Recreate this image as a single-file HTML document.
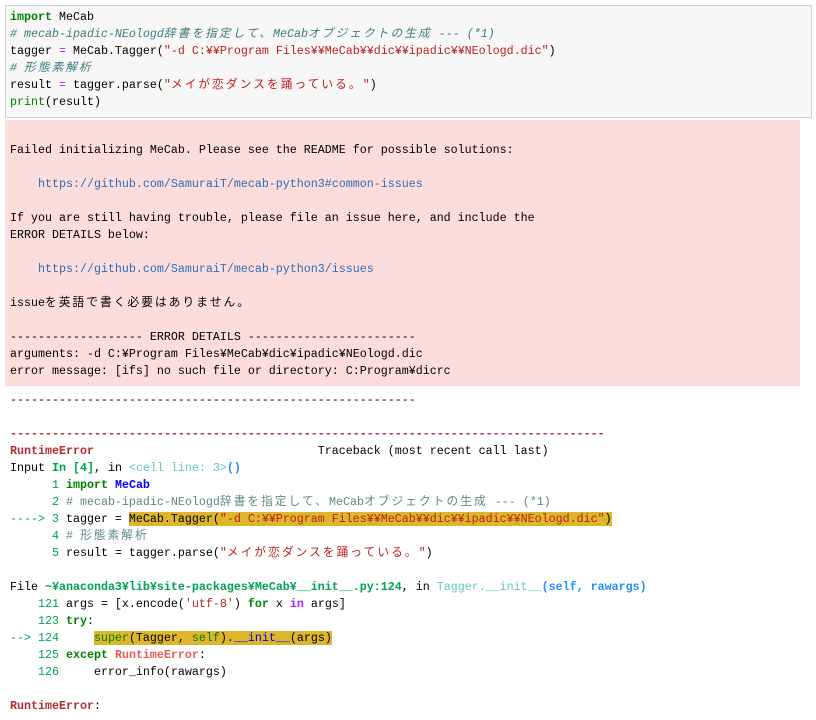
<!DOCTYPE html>
<html><head><meta charset="utf-8"><style>
body{margin:0;background:#fff;width:816px;height:720px;overflow:hidden;font-family:"Liberation Mono","Noto Sans CJK JP",monospace;font-size:11.67px;}
pre{margin:0;font:inherit;line-height:17px;white-space:pre;}
.j{letter-spacing:2.1px;font-family:"Noto Sans CJK JP",monospace;line-height:0;}
#code{position:absolute;left:5px;top:5px;width:805px;height:111px;background:#f7f7f7;border:1px solid #cfcfcf;}
#code pre{position:absolute;left:4px;top:3px;}
#err{position:absolute;left:5px;top:120px;width:795px;height:266px;background:#fddcdc;}
#err pre{position:absolute;left:5px;top:4.5px;}
#tb{position:absolute;left:10px;top:391.5px;}
.k{color:#008000;font-weight:bold}.c{color:#3d7b7b;font-style:italic}.s{color:#ba2121}.o{color:#aa22ff}.b{color:#008000}
.l{color:#2a6eb8}
.re{color:#b22b31;font-weight:bold}.g{color:#00a250}.gb{color:#00a250;font-weight:bold}
.cy{color:#60c6c8}.bl{color:#208ffb;font-weight:bold}.hl{background:#ddb62b}
.gy{color:#5f8787}.rd{color:#e75c58}.bu{color:#0000ff}
.mg{color:#aa22ff;font-weight:bold}.bk{color:#0000ff;font-weight:bold}.gk{color:#008000;font-weight:bold}.dr{color:#ba2121}
</style></head><body>
<div id="code"><pre><span class="k">import</span> MeCab
<span class="c"># mecab-ipadic-NEologd<span class="j">辞書を指定して、</span>MeCab<span class="j">オブジェクトの生成</span> --- (*1)</span>
tagger <span class="o">=</span> MeCab.Tagger(<span class="s">"-d C:¥¥Program Files¥¥MeCab¥¥dic¥¥ipadic¥¥NEologd.dic"</span>)
<span class="c"># <span class="j">形態素解析</span></span>
result <span class="o">=</span> tagger.parse(<span class="s">"<span class="j">メイが恋ダンスを踊っている。</span>"</span>)
<span class="b">print</span>(result)</pre></div>
<div id="err"><pre>

Failed initializing MeCab. Please see the README for possible solutions:

    <span class="l">https://github.com/SamuraiT/mecab-python3#common-issues</span>

If you are still having trouble, please file an issue here, and include the
ERROR DETAILS below:

    <span class="l">https://github.com/SamuraiT/mecab-python3/issues</span>

issue<span class="j">を英語で書く必要はありません。</span>

------------------- ERROR DETAILS ------------------------
arguments: -d C:¥Program Files¥MeCab¥dic¥ipadic¥NEologd.dic
error message: [ifs] no such file or directory: C:Program¥dicrc</pre></div>
<pre id="tb">----------------------------------------------------------

<span class="re">-------------------------------------------------------------------------------------</span>
<span class="re">RuntimeError</span>                                Traceback (most recent call last)
Input <span class="gb">In [4]</span>, in <span class="cy">&lt;cell line: 3&gt;</span><span class="bl">()</span>
<span class="g">      1</span> <span class="gk">import</span> <span class="bk">MeCab</span>
<span class="g">      2</span> <span class="gy"># mecab-ipadic-NEologd<span class="j">辞書を指定して、</span>MeCab<span class="j">オブジェクトの生成</span> --- (*1)</span>
<span class="g">----&gt; 3</span> tagger = <span class="hl">MeCab.Tagger(<span class="dr">"-d C:¥¥Program Files¥¥MeCab¥¥dic¥¥ipadic¥¥NEologd.dic"</span>)</span>
<span class="g">      4</span> <span class="gy"># <span class="j">形態素解析</span></span>
<span class="g">      5</span> result = tagger.parse(<span class="dr">"<span class="j">メイが恋ダンスを踊っている。</span>"</span>)

File <span class="gb">~¥anaconda3¥lib¥site-packages¥MeCab¥__init__.py:124</span>, in <span class="cy">Tagger.__init__</span><span class="bl">(self, rawargs)</span>
<span class="g">    121</span> args = [x.encode(<span class="dr">'utf-8'</span>) <span class="gk">for</span> x <span class="mg">in</span> args]
<span class="g">    123</span> <span class="gk">try</span>:
<span class="g">--&gt; 124</span>     <span class="hl"><span class="b">super</span>(Tagger, <span class="b">self</span>).<span class="bu">__init__</span>(args)</span>
<span class="g">    125</span> <span class="gk">except</span> <span class="rd" style="font-weight:bold">RuntimeError</span>:
<span class="g">    126</span>     error_info(rawargs)

<span class="re">RuntimeError</span>: </pre>
</body></html>
